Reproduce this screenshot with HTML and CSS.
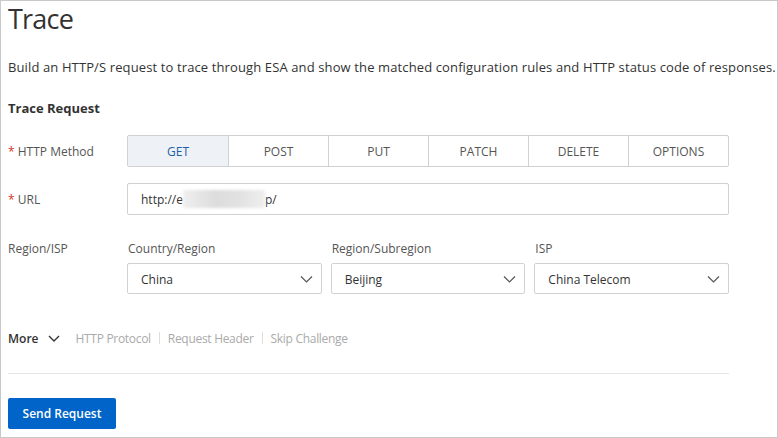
FILE: index.html
```html
<!DOCTYPE html>
<html lang="en">
<head>
<meta charset="utf-8">
<title>Trace</title>
<link rel="stylesheet" href="styles.css">
</head>
<body>
<div class="frame">
  <h1 class="title">Trace</h1>
  <p class="desc">Build an HTTP/S request to trace through ESA and show the matched configuration rules and HTTP status code of responses.</p>
  <h2 class="section">Trace Request</h2>

  <div class="row row-method">
    <div class="label"><span class="req">*</span> HTTP Method</div>
    <div class="segmented">
      <div class="seg active">GET</div>
      <div class="seg">POST</div>
      <div class="seg">PUT</div>
      <div class="seg">PATCH</div>
      <div class="seg">DELETE</div>
      <div class="seg">OPTIONS</div>
    </div>
  </div>

  <div class="row row-url">
    <div class="label"><span class="req">*</span> URL</div>
    <div class="input">http://e<span class="blur"></span>p/</div>
  </div>

  <div class="row row-region">
    <div class="label label-top">Region/ISP</div>
    <div class="selects">
      <div class="field">
        <div class="sublabel">Country/Region</div>
        <div class="select"><span>China</span><svg class="chev" width="13" height="8" viewBox="0 0 13 8"><path d="M1 1.5 L6.5 7 L12 1.5" fill="none" stroke="#555" stroke-width="1.2"/></svg></div>
      </div>
      <div class="field">
        <div class="sublabel">Region/Subregion</div>
        <div class="select"><span>Beijing</span><svg class="chev" width="13" height="8" viewBox="0 0 13 8"><path d="M1 1.5 L6.5 7 L12 1.5" fill="none" stroke="#555" stroke-width="1.2"/></svg></div>
      </div>
      <div class="field">
        <div class="sublabel">ISP</div>
        <div class="select"><span>China Telecom</span><svg class="chev" width="13" height="8" viewBox="0 0 13 8"><path d="M1 1.5 L6.5 7 L12 1.5" fill="none" stroke="#555" stroke-width="1.2"/></svg></div>
      </div>
    </div>
  </div>

  <div class="more">
    <span class="more-label">More</span>
    <svg class="more-chev" width="12" height="7" viewBox="0 0 12 7"><path d="M1 1 L6 6 L11 1" fill="none" stroke="#333" stroke-width="1.4"/></svg>
    <span class="opt">HTTP Protocol</span>
    <span class="sep"></span>
    <span class="opt">Request Header</span>
    <span class="sep"></span>
    <span class="opt">Skip Challenge</span>
  </div>

  <div class="divider"></div>

  <button class="btn">Send Request</button>
</div>
</body>
</html>
```
FILE: styles.css
```css
* { box-sizing: border-box; }
html, body { margin: 0; padding: 0; background: #fff; }
body { font-family: "Open Sans", "Noto Sans", sans-serif; color: #333; }

.frame {
  width: 778px;
  height: 438px;
  border: 1px solid #c9c9c9;
  padding: 0 7px;
  overflow: hidden;
}

.title {
  margin: 0;
  font-size: 27px;
  font-weight: 400;
  letter-spacing: -0.8px;
  line-height: 36px;
  color: #333;
}

.desc {
  margin: 18px 0 0;
  font-size: 13px;
  letter-spacing: 0.12px;
  line-height: 24px;
  color: #333;
  white-space: nowrap;
}

.section {
  margin: 20px 0 0;
  font-size: 13px;
  font-weight: 700;
  line-height: 18px;
  color: #333;
}

.row {
  display: grid;
  grid-template-columns: 119px 602px;
  align-items: center;
}
.row-method { margin-top: 18px; }
.row-url { margin-top: 16px; }
.row-region { margin-top: 25px; align-items: start; }

.label {
  font-size: 12px;
  color: #555;
}
.req { color: #d93026; }
.label-top { line-height: 18px; }

.segmented {
  display: grid;
  grid-template-columns: repeat(6, 1fr);
  height: 32px;
  border: 1px solid #d1d1d1;
  border-radius: 2px;
}
.seg {
  display: flex;
  align-items: center;
  justify-content: center;
  font-size: 12px;
  color: #555;
  border-left: 1px solid #d1d1d1;
}
.seg:first-child { border-left: none; }
.seg.active { background: #eef1f6; color: #1f5fa8; }

.input {
  height: 32px;
  border: 1px solid #d1d1d1;
  border-radius: 2px;
  display: flex;
  align-items: center;
  padding-left: 13px;
  font-size: 12px;
  color: #333;
}
.blur {
  display: inline-block;
  width: 82px;
  height: 18px;
  background: linear-gradient(90deg, #efefef, #dcdcdc 40%, #e2e2e2 70%, #eeeeee);
  filter: blur(1.5px);
}

.selects {
  display: grid;
  grid-template-columns: repeat(3, 1fr);
  column-gap: 9px;
}
.sublabel {
  font-size: 12px;
  line-height: 18px;
  color: #555;
  padding-left: 1px;
}
.select {
  margin-top: 5px;
  height: 31px;
  border: 1px solid #d1d1d1;
  border-radius: 2px;
  display: flex;
  align-items: center;
  justify-content: space-between;
  padding: 1px 8px 0 13px;
  font-size: 12px;
  color: #333;
}

.more {
  margin-top: 35px;
  display: flex;
  align-items: center;
  height: 18px;
  font-size: 12px;
}
.more-label { color: #333; font-weight: 600; }
.more-chev { margin-left: 10px; margin-right: 15px; }
.opt { color: #aaa; letter-spacing: -0.3px; }
.sep {
  width: 1px;
  height: 12px;
  background: #ddd;
  margin: 0 8px;
}

.divider {
  margin-top: 26px;
  width: 721px;
  height: 1px;
  background: #e6e6e6;
}

.btn {
  margin-top: 24px;
  width: 108px;
  height: 31px;
  border: none;
  border-radius: 2px;
  background: #0064c8;
  color: #fff;
  font-family: "Open Sans", "Noto Sans", sans-serif;
  font-size: 12px;
  font-weight: 600;
  padding: 0;
}
```
